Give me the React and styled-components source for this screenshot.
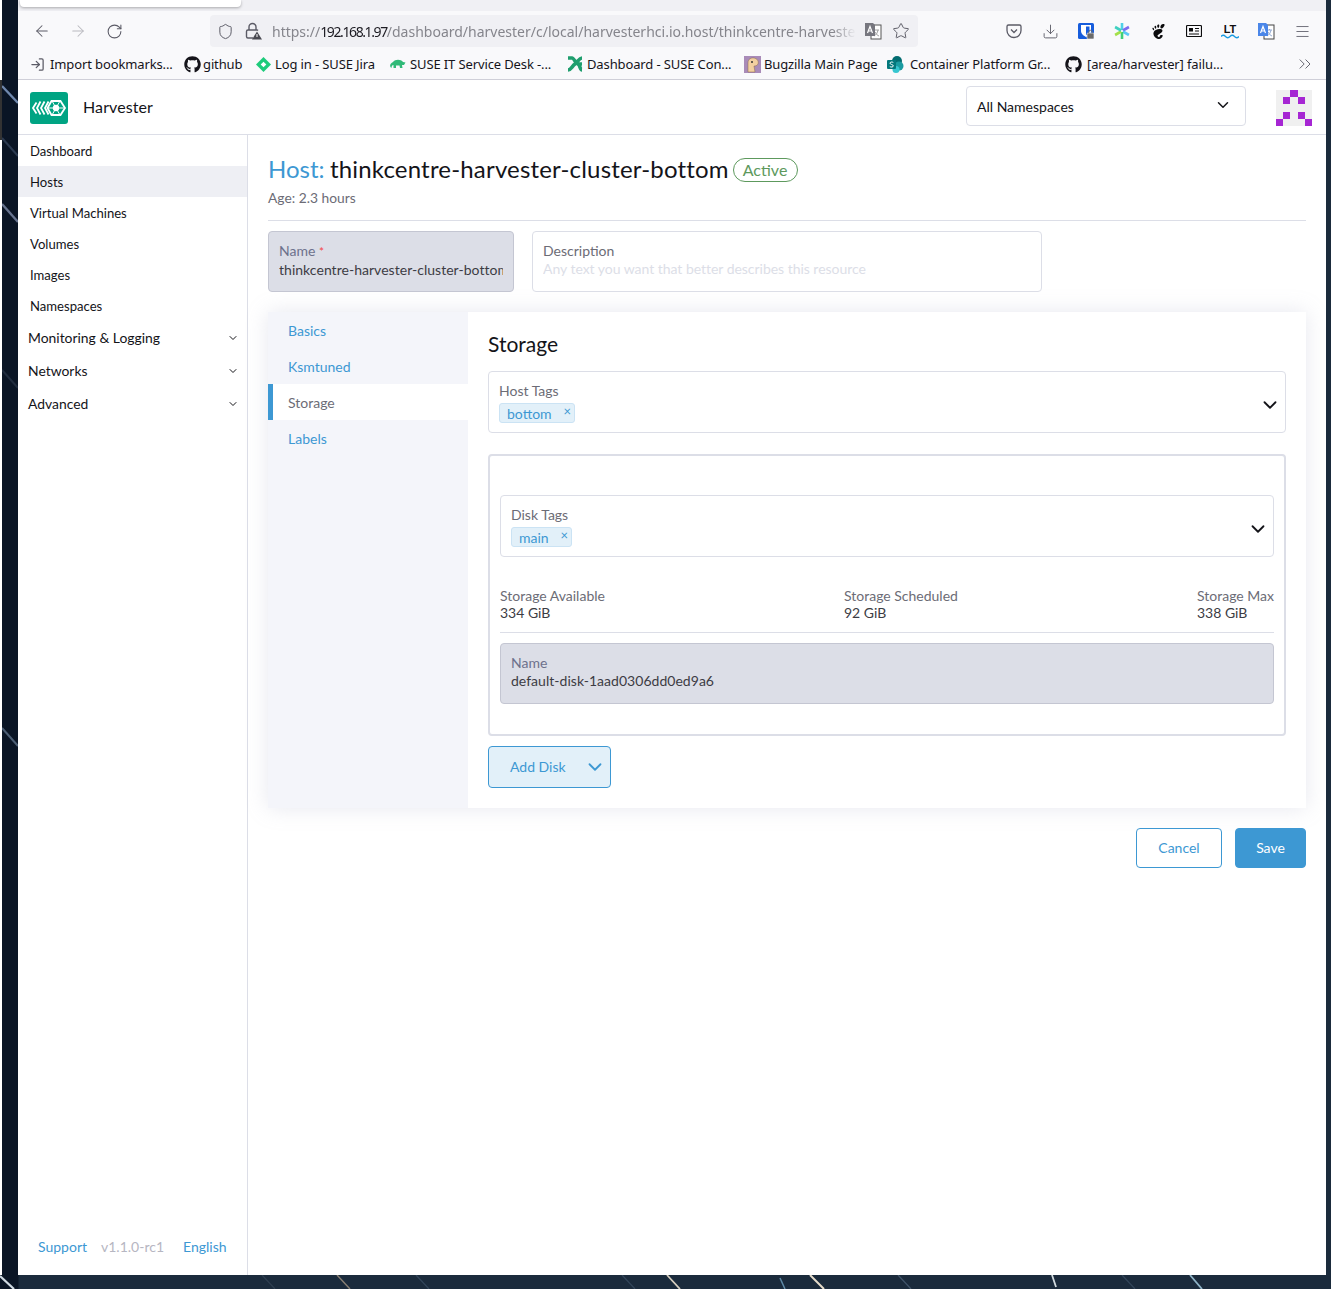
import React from 'react';
import styled, { createGlobalStyle } from 'styled-components';
import { ArrowLeft, ArrowRight, RotateCw, Shield, Star, Download, Menu, ChevronsRight, ChevronDown, LogIn } from 'lucide-react';
import { FaGithub } from 'react-icons/fa';
import { SiGnome } from 'react-icons/si';

const GlobalStyle = createGlobalStyle`
    html, body {
        margin: 0;
        padding: 0;
        background: #1a2a3a;
    }
    * {
        box-sizing: border-box;
    }
`;

const Desktop = styled.div`
    position: relative;
    width: 1331px;
    height: 1289px;
    overflow: hidden;
    background: linear-gradient(90deg, #0a1525 0, #0a1525 18px, #1b2b3c 19px);
    font-family: Lato, "Noto Sans", sans-serif;
    font-size: 14px;
    color: #141419;
`;

const Wallpaper = styled.svg`
    position: absolute;
    left: 0;
    top: 0;
`;

const EdgeStrip = styled.div`
    position: absolute;
    left: 0;
    top: 0;
    width: 2px;
    height: 1275px;
    background: linear-gradient(180deg, #fff 0, #fff 80px, #333 80px, #333 140px, #fff 140px);
`;

const Win = styled.div`
    position: relative;
    margin-left: 18px;
    width: 1308px;
    height: 1275px;
    display: flex;
    flex-direction: column;
    background: #fff;
`;

const TabStrip = styled.div`
    height: 11px;
    background: #f0f0f4;
    padding-left: 2px;
`;

const ActiveTab = styled.div`
    width: 221px;
    height: 7px;
    background: #fff;
    border-radius: 0 0 4px 4px;
    box-shadow: 0 1px 3px rgba(0, 0, 0, 0.3);
`;

const Toolbar = styled.div`
    height: 40px;
    display: flex;
    align-items: center;
    padding: 0 6px;
    background: #f9f9fb;
    color: #5b5b66;
`;

const Slot = styled.div`
    width: 36px;
    height: 32px;
    display: flex;
    align-items: center;
    justify-content: center;
    flex: none;
    color: ${(p) => p.$color || 'inherit'};
    opacity: ${(p) => (p.$dim ? 0.4 : 1)};
`;

const UrlBar = styled.div`
    width: 708px;
    height: 32px;
    margin-left: 78px;
    display: flex;
    align-items: center;
    background: #f0f0f4;
    border-radius: 4px;
    flex: none;
`;

const UrlIcon = styled.div`
    width: 27px;
    display: flex;
    justify-content: center;
    flex: none;
    margin-left: ${(p) => p.$left || 0}px;
`;

const UrlText = styled.div`
    width: 584px;
    margin-left: 6px;
    overflow: hidden;
    white-space: nowrap;
    font-family: "Noto Sans", sans-serif;
    font-size: 14px;
    color: #85858c;
    mask-image: linear-gradient(90deg, #000 96%, transparent 100%);

    b {
        font-weight: 400;
        color: #1c1b22;
        letter-spacing: -1.4px;
    }
`;

const ToolIcons = styled.div`
    margin-left: auto;
    display: flex;
`;

const LtMark = styled.div`
    display: flex;
    flex-direction: column;
    align-items: center;
    font-family: "Liberation Sans", sans-serif;
    font-size: 11px;
    font-weight: 700;
    line-height: 10px;
    color: #111;
`;

const BookmarkBar = styled.div`
    height: 29px;
    display: flex;
    align-items: flex-start;
    padding: 3px 0 0 12px;
    background: #f9f9fb;
    border-bottom: 1px solid #cfcfd8;
    position: relative;
`;

const Bookmark = styled.div`
    width: ${(p) => p.$w}px;
    flex: none;
    height: 20px;
    display: flex;
    align-items: center;
    gap: ${(p) => p.$gap || 4}px;
    font-family: "Noto Sans", sans-serif;
    font-size: 13px;
    letter-spacing: -0.12px;
    color: #15141a;
    white-space: nowrap;
    overflow: hidden;
`;

const BookmarkMore = styled.div`
    margin-left: auto;
    margin-right: 11px;
    height: 20px;
    display: flex;
    align-items: center;
    color: #5b5b66;
`;

const AppHeader = styled.header`
    height: 55px;
    display: flex;
    align-items: center;
    padding: 0 14px 0 12px;
    border-bottom: 1px solid #dcdee7;
    flex: none;
`;

const LogoWrap = styled.div`
    display: flex;
    margin-top: 1px;
`;

const ProductName = styled.div`
    margin: 0 0 1px 15px;
    font-size: 16px;
    letter-spacing: 0.1px;
`;

const NamespaceSelect = styled.div`
    margin: 0 0 2px auto;
    width: 280px;
    height: 40px;
    display: flex;
    align-items: center;
    justify-content: space-between;
    padding: 0 13px 0 10px;
    border: 1px solid #dcdee7;
    border-radius: 4px;

    svg {
        margin-bottom: 2px;
    }
`;

const Avatar = styled.svg`
    margin: 2px 0 0 30px;
    flex: none;
`;

const Body = styled.div`
    flex: 1;
    display: flex;
    min-height: 0;
`;

const Sidebar = styled.nav`
    width: 230px;
    flex: none;
    display: flex;
    flex-direction: column;
    border-right: 1px solid #dcdee7;
`;

const NavItem = styled.div`
    height: 31px;
    display: flex;
    align-items: center;
    padding-left: 12px;
    font-size: 13.1px;
    background: ${(p) => (p.$active ? '#eeeff4' : 'transparent')};
`;

const NavGroup = styled.div`
    height: 33px;
    display: flex;
    align-items: center;
    justify-content: space-between;
    padding: 0 8px 0 10px;
    font-size: 13.9px;
`;

const SideFooter = styled.div`
    margin-top: auto;
    height: 58px;
    display: flex;
    align-items: center;
    gap: 14px;
    padding-left: 20px;
`;

const FootLink = styled.span`
    color: #3d98d3;
    margin-left: ${(p) => p.$left || 0}px;
`;

const FootMuted = styled.span`
    color: #b6b6c2;
`;

const Main = styled.main`
    flex: 1;
    min-width: 0;
    padding: 20px;
`;

const TitleRow = styled.div`
    display: flex;
    align-items: center;
    gap: 4px;
    height: 30px;
`;

const Title = styled.h1`
    margin: 0;
    padding-bottom: 4px;
    font-size: 24px;
    font-weight: 400;
    letter-spacing: 0.18px;
    word-spacing: -1px;
    white-space: nowrap;

    span {
        color: #3d98d3;
        letter-spacing: 0;
    }
`;

const Badge = styled.span`
    height: 24px;
    padding: 0 10px 1px 9px;
    display: flex;
    align-items: center;
    border: 1px solid #5d995d;
    border-radius: 12px;
    color: #5d995d;
    font-size: 16px;
`;

const Age = styled.div`
    margin-top: 4px;
    line-height: 18px;
    font-size: 13.8px;
    color: #6c6c76;
`;

const Divider = styled.hr`
    margin: ${(p) => p.$m || '13px 0 10px'};
    border: 0;
    border-top: 1px solid #dcdee7;
`;

const FieldRow = styled.div`
    display: flex;
    gap: 18px;
`;

const Field = styled.div`
    width: ${(p) => p.$w || '100%'};
    height: 61px;
    padding: 10px 10px 0;
    border: 1px solid ${(p) => (p.$locked ? '#c4c6d2' : '#dcdee7')};
    border-radius: 4px;
    background: ${(p) => (p.$locked ? '#dcdee7' : '#fff')};
    line-height: 18px;
`;

const FieldLabel = styled.div`
    color: ${(p) => (p.$locked ? '#6d718c' : '#6c6c76')};

    i {
        font-style: normal;
        color: #f64747;
        font-size: 12px;
    }
`;

const FieldValue = styled.div`
    color: ${(p) => (p.$placeholder ? '#dcdee7' : '#3c3c44')};
    letter-spacing: ${(p) => (p.$placeholder ? '-0.03px' : '0.03px')};
    overflow: hidden;
    white-space: nowrap;
`;

const Panel = styled.section`
    margin-top: 20px;
    display: flex;
    box-shadow: 0 0 20px rgba(160, 165, 190, 0.25);
`;

const TabList = styled.div`
    width: 200px;
    flex: none;
    background: #f4f5fa;
`;

const Tab = styled.div`
    height: 36px;
    display: flex;
    align-items: center;
    padding-left: ${(p) => (p.$active ? 15 : 20)}px;
    color: ${(p) => (p.$active ? '#6c6c76' : '#3d98d3')};
    background: ${(p) => (p.$active ? '#fff' : 'transparent')};
    border-left: ${(p) => (p.$active ? '5px solid #3d98d3' : '0')};
`;

const TabBody = styled.div`
    flex: 1;
    min-width: 0;
    padding: 20px;
    background: #fff;
`;

const SectionTitle = styled.h3`
    margin: 0 0 15px;
    font-size: 21px;
    line-height: 24px;
    font-weight: 400;
`;

const TagSelect = styled.div`
    height: 62px;
    display: flex;
    align-items: center;
    justify-content: space-between;
    padding: 0 4px 0 10px;
    border: 1px solid #dcdee7;
    border-radius: 4px;
`;

const TagChevron = styled(ChevronDown)`
    margin-top: 5px;
`;

const TagLabel = styled.div`
    line-height: 18px;
    color: #6c6c76;
`;

const Tag = styled.div`
    width: ${(p) => p.$w}px;
    height: 20px;
    margin-top: 3px;
    display: flex;
    align-items: center;
    justify-content: space-between;
    padding: 1px 3px 0 7px;
    background: #e2f0f9;
    border: 1px solid #cbe3f4;
    border-radius: 3px;
    color: #3d98d3;
`;

const TagX = styled.span`
    font-size: 13px;
    line-height: 14px;
    margin-top: -4px;
`;

const DiskBox = styled.div`
    margin-top: 21px;
    padding: 39px 10px 30px;
    border: 2px solid #dcdee7;
    border-radius: 4px;
`;

const Stats = styled.div`
    margin-top: 30px;
    display: flex;
    justify-content: space-between;
    line-height: 17px;
`;

const StatLabel = styled.div`
    color: #6c6c76;
`;

const StatValue = styled.div`
    color: #3c3c44;
`;

const AddDisk = styled.button`
    margin-top: 10px;
    width: 123px;
    height: 42px;
    display: flex;
    align-items: center;
    justify-content: space-between;
    padding: 0 4px 2px 21px;
    background: #e2f0f9;
    border: 1px solid #3d98d3;
    border-radius: 4px;
    color: #3d98d3;
    font: inherit;

    svg {
        margin-top: 2px;
    }
`;

const Actions = styled.div`
    margin-top: 20px;
    display: flex;
    justify-content: flex-end;
    gap: 13px;
`;

const ActionButton = styled.button`
    width: ${(p) => p.$w}px;
    height: 40px;
    padding: 0 0 2px;
    border: 1px solid #3d98d3;
    border-radius: 4px;
    background: ${(p) => (p.$primary ? '#3d98d3' : '#fff')};
    color: ${(p) => (p.$primary ? '#fff' : '#3d98d3')};
    font: inherit;
`;

const STREAKS = [
    [2, 86, 18, 103, '#6f88ad', 2.4],
    [2, 138, 18, 156, '#2b3a50', 2],
    [2, 204, 18, 222, '#66738f', 2.4],
    [2, 370, 18, 388, '#202c3e', 2],
    [2, 728, 18, 746, '#4c5e74', 2],
    [0, 1276, 14, 1289, '#cfdae2', 2.2],
    [262, 1275, 275, 1289, '#2f3f50', 1.2],
    [337, 1275, 350, 1289, '#8a8074', 1.4],
    [416, 1275, 429, 1289, '#33465a', 1.2],
    [622, 1275, 635, 1289, '#33465a', 1.2],
    [667, 1275, 680, 1289, '#d8d0c0', 1.8],
    [780, 1278, 785, 1289, '#5f8aa6', 1.5],
    [810, 1275, 824, 1289, '#e6dcca', 2],
    [898, 1275, 911, 1289, '#41556a', 1.2],
    [1052, 1275, 1056, 1287, '#d2dade', 1.8],
    [1122, 1275, 1135, 1289, '#33465a', 1.2],
    [1190, 1275, 1202, 1289, '#8fb4c8', 1.8],
];

function Streaks() {
    return (
        <Wallpaper width="1331" height="1289">
            {STREAKS.map(([x1, y1, x2, y2, c, w]) => (
                <line key={`${x1}-${y1}`} x1={x1} y1={y1} x2={x2} y2={y2} stroke={c} strokeWidth={w} />
            ))}
        </Wallpaper>
    );
}

function HarvesterLogo() {
    return (
        <svg width="38" height="32" viewBox="0 0 38 32">
            <rect width="38" height="32" rx="3" fill="#00a483" />
            <g fill="none" stroke="#fff" strokeWidth="1.800">
                <path d="M6.500 10.500 L3 16 L6.500 21.500" />
                <path d="M10.500 9.500 L7 16 L10.500 22.500" />
                <path d="M14.500 9.500 L11 16 L14.500 22.500" />
                <path d="M18.500 9.500 L15 16 L18.500 22.500" />
                <path d="M21.500 9 H30.500 L35 16 L30.500 23 H21.500 L17.500 16 Z" />
                <path d="M17.500 16 H35 M22 9 L30 23 M30 9 L22 23" strokeWidth="1" />
            </g>
            <circle cx="26" cy="16" r="3.200" fill="#fff" />
        </svg>
    );
}

function LockWarning() {
    return (
        <svg width="18" height="18" viewBox="0 0 18 18" fill="none">
            <path d="M5 8 V5 a3.500 3.500 0 0 1 7 0 V8" stroke="#5b5b66" strokeWidth="1.400" />
            <path d="M9 16 H4 a1.500 1.500 0 0 1 -1.500 -1.500 V9.500 A1.500 1.500 0 0 1 4 8 H13 a1.500 1.500 0 0 1 1 .5" stroke="#5b5b66" strokeWidth="1.400" />
            <path d="M13 9.500 L18 17.500 H8 Z" fill="#4a4a52" />
            <rect x="12.500" y="12" width="1" height="3" fill="#fff" />
        </svg>
    );
}

function PocketIcon() {
    return (
        <svg width="16" height="16" viewBox="0 0 16 16" fill="none" stroke="#5b5b66" strokeWidth="1.300">
            <path d="M2.500 2 H13.500 A1.500 1.500 0 0 1 15 3.500 V7.500 A7 7 0 0 1 1 7.500 V3.500 A1.500 1.500 0 0 1 2.500 2 Z" />
            <path d="M5 6.500 L8 9.500 L11 6.500" />
        </svg>
    );
}

function BitwardenIcon() {
    return (
        <svg width="16" height="16" viewBox="0 0 16 16">
            <rect width="16" height="16" rx="1.500" fill="#175ddc" />
            <path d="M3 2 H13 V8 C13 11 10 13 8 14 C6 13 3 11 3 8 Z" fill="#fff" />
            <path d="M8 3.500 H11.500 V8 C11.500 10 9.500 11.500 8 12.300 Z" fill="#175ddc" />
            <rect x="9" y="10" width="7" height="6" rx="1" fill="#6b6b6b" stroke="#fff" strokeWidth="0.600" />
            <path d="M10.800 10 V9 a1.700 1.700 0 0 1 3.400 0 V10" fill="none" stroke="#6b6b6b" strokeWidth="1" />
        </svg>
    );
}

function AsteriskIcon() {
    const spokes = ['#4fd1e8', '#7c6df0', '#5cc8f5', '#3fd07a', '#a4e04a', '#3fd0c0'];
    return (
        <svg width="16" height="16" viewBox="0 0 16 16">
            {spokes.map((c, i) => (
                <rect key={c} x="6.700" y="0" width="2.600" height="7" fill={c} transform={`rotate(${i * 60} 8 8)`} />
            ))}
        </svg>
    );
}

function NewsIcon() {
    return (
        <svg width="16" height="14" viewBox="0 0 16 14" fill="none" stroke="#0c0c0d">
            <rect x="0.500" y="1.500" width="15" height="11" rx="1" strokeWidth="1.200" />
            <rect x="3" y="4" width="4" height="3.500" fill="#0c0c0d" strokeWidth="0" />
            <path d="M9 4.500 H13 M9 7 H13 M3 10 H13" strokeWidth="1" />
        </svg>
    );
}

function TranslateIcon() {
    return (
        <svg width="18" height="18" viewBox="0 0 18 18">
            <rect x="7" y="3" width="10" height="14" fill="#fff" stroke="#444" strokeWidth="1" />
            <path d="M10 8 H15 M12.500 7 V8 M14 8 C13.500 11 12 13 10 14 M11 10 C12 12 13.500 13.500 15 14" stroke="#8aa4d0" strokeWidth="0.900" fill="none" />
            <path d="M1 1 H9 L11 3 V14 H1 Z" fill="#4a86e8" />
            <path d="M3.500 11 L6 4.500 L8.500 11 M4.500 9 H7.500" stroke="#fff" strokeWidth="1.200" fill="none" />
        </svg>
    );
}

function TranslateGrey() {
    return (
        <svg width="18" height="18" viewBox="0 0 18 18">
            <rect x="7" y="3" width="10" height="14" fill="#fff" stroke="#555" strokeWidth="1" />
            <path d="M10 8 H15 M14 8 C13.500 11 12 13 10 14 M11 10 C12 12 13.500 13.500 15 14" stroke="#999" strokeWidth="0.900" fill="none" />
            <path d="M1 1 H9 L11 3 V14 H1 Z" fill="#77777f" />
            <path d="M3.500 11 L6 4.500 L8.500 11 M4.500 9 H7.500" stroke="#fff" strokeWidth="1.200" fill="none" />
        </svg>
    );
}

function JiraIcon() {
    return (
        <svg width="15" height="15" viewBox="0 0 16 16">
            <path d="M8 0 L16 8 L8 16 L0 8 Z" fill="#1ecb7b" />
            <path d="M8 5 L11 8 L8 11 L5 8 Z" fill="#fff" />
        </svg>
    );
}

function GeekoIcon() {
    return (
        <svg width="18" height="14" viewBox="0 0 18 14">
            <path d="M5 5 C7 2 13 2 15 5 L17.500 5.500 L16 8 L14 8 L14.500 11 L12 11 L11.500 8.500 L8 8.500 L8 11 L5.500 11 L5.500 8 C4 8 3.500 9.500 3.500 11 C1.500 10 1.500 6.500 5 5 Z" fill="#30ba78" />
        </svg>
    );
}

function ConfluenceIcon() {
    return (
        <svg width="18" height="18" viewBox="0 0 18 18" fill="none" stroke="#1f9e6e" strokeWidth="3.600">
            <path d="M2 3 L6 3 C8 3 10 9 12 9 L16 9" />
            <path d="M16 3 C13 3 12 7 9 9 C6 11 5 15 2 15" />
            <path d="M12 9 C14 10 14 15 16 15" />
        </svg>
    );
}

function BugzillaIcon() {
    return (
        <svg width="17" height="17" viewBox="0 0 17 17">
            <rect width="17" height="17" fill="#a98bb8" />
            <path d="M4 16 V7 C4 3 7 1.500 10 2 C13 2.500 15 5 14 8 C13 10 11 10 10 10 L11 16 Z" fill="#f2cfa0" stroke="#8a6a4a" strokeWidth="0.500" />
            <circle cx="8" cy="6" r="1" fill="#333" />
        </svg>
    );
}

function SharePointIcon() {
    return (
        <svg width="17" height="17" viewBox="0 0 17 17">
            <circle cx="10" cy="5" r="5" fill="#036c70" />
            <circle cx="12" cy="10" r="4.500" fill="#1a9ba1" />
            <circle cx="9" cy="13.500" r="3.500" fill="#37c6d0" />
            <rect x="0" y="4" width="9" height="9" rx="1" fill="#03787c" />
            <path d="M6.300 6.500 C5 5.600 3 6 3 7.200 C3 8.800 6.300 8.200 6.300 9.900 C6.300 11.200 4 11.400 2.800 10.500" stroke="#fff" fill="none" strokeWidth="1" />
        </svg>
    );
}

function LtIcon() {
    return (
        <LtMark>
            LT
            <svg width="18" height="5" viewBox="0 0 18 5">
                <path d="M0 2.500 Q2.250 0 4.500 2.500 T9 2.500 T13.500 2.500 T18 2.500" stroke="#1a9be0" strokeWidth="1.300" fill="none" />
            </svg>
        </LtMark>
    );
}

function UserAvatar() {
    const cells = [[2, 0], [1, 1], [3, 1], [1, 3], [3, 3], [0, 4], [4, 4]];
    return (
        <Avatar width="36" height="36" viewBox="0 0 5 5" shapeRendering="crispEdges">
            <rect width="5" height="5" fill="#f0f0f0" />
            {cells.map(([x, y]) => (
                <rect key={`${x}${y}`} x={x} y={y} width="1" height="1" fill="#a626d3" />
            ))}
        </Avatar>
    );
}

const BOOKMARKS = [
    { w: 154, label: 'Import bookmarks...', gap: 5, icon: <LogIn size={15} color="#5b5b66" /> },
    { w: 72, label: 'github', gap: 2, icon: <FaGithub size={17} color="#15141a" /> },
    { w: 132, label: 'Log in - SUSE Jira', icon: <JiraIcon /> },
    { w: 178, label: 'SUSE IT Service Desk -...', icon: <GeekoIcon /> },
    { w: 178, label: 'Dashboard - SUSE Con...', gap: 3, icon: <ConfluenceIcon /> },
    { w: 143, label: 'Bugzilla Main Page', gap: 3, icon: <BugzillaIcon /> },
    { w: 178, label: 'Container Platform Gr...', gap: 6, icon: <SharePointIcon /> },
    { w: 190, label: '[area/harvester] failu...', gap: 5, icon: <FaGithub size={17} color="#15141a" /> },
];

const NAV_ITEMS = ['Dashboard', 'Hosts', 'Virtual Machines', 'Volumes', 'Images', 'Namespaces'];
const NAV_GROUPS = ['Monitoring & Logging', 'Networks', 'Advanced'];
const TABS = ['Basics', 'Ksmtuned', 'Storage', 'Labels'];

export default function App() {
    return (
        <Desktop>
            <GlobalStyle />
            <Streaks />
            <EdgeStrip />
            <Win>
                <TabStrip>
                    <ActiveTab />
                </TabStrip>
                <Toolbar>
                    <Slot><ArrowLeft size={18} strokeWidth={1.400} /></Slot>
                    <Slot $dim><ArrowRight size={18} strokeWidth={1.400} /></Slot>
                    <Slot><RotateCw size={17} strokeWidth={1.500} /></Slot>
                    <UrlBar>
                        <UrlIcon $left={2}><Shield size={17} strokeWidth={1.400} /></UrlIcon>
                        <UrlIcon><LockWarning /></UrlIcon>
                        <UrlText>https://<b>192.168.1.97</b>/dashboard/harvester/c/local/harvesterhci.io.host/thinkcentre-harvester</UrlText>
                        <UrlIcon $left={3}><TranslateGrey /></UrlIcon>
                        <UrlIcon $left={1}><Star size={18} strokeWidth={1.300} /></UrlIcon>
                    </UrlBar>
                    <ToolIcons>
                        <Slot><PocketIcon /></Slot>
                        <Slot><Download size={17} strokeWidth={1.300} /></Slot>
                        <Slot><BitwardenIcon /></Slot>
                        <Slot><AsteriskIcon /></Slot>
                        <Slot $color="#0c0c0d"><SiGnome size={15} /></Slot>
                        <Slot><NewsIcon /></Slot>
                        <Slot><LtIcon /></Slot>
                        <Slot><TranslateIcon /></Slot>
                        <Slot><Menu size={17} strokeWidth={1.200} /></Slot>
                    </ToolIcons>
                </Toolbar>
                <BookmarkBar>
                    {BOOKMARKS.map((b) => (
                        <Bookmark key={b.label} $w={b.w} $gap={b.gap}>
                            {b.icon}
                            {b.label}
                        </Bookmark>
                    ))}
                    <BookmarkMore><ChevronsRight size={20} strokeWidth={1.100} /></BookmarkMore>
                </BookmarkBar>
                <AppHeader>
                    <LogoWrap><HarvesterLogo /></LogoWrap>
                    <ProductName>Harvester</ProductName>
                    <NamespaceSelect>
                        All Namespaces
                        <ChevronDown size={18} strokeWidth={2} />
                    </NamespaceSelect>
                    <UserAvatar />
                </AppHeader>
                <Body>
                    <Sidebar>
                        {NAV_ITEMS.map((item) => (
                            <NavItem key={item} $active={item === 'Hosts'}>{item}</NavItem>
                        ))}
                        {NAV_GROUPS.map((group) => (
                            <NavGroup key={group}>
                                {group}
                                <ChevronDown size={12} strokeWidth={2} />
                            </NavGroup>
                        ))}
                        <SideFooter>
                            <FootLink>Support</FootLink>
                            <FootMuted>v1.1.0-rc1</FootMuted>
                            <FootLink $left={5}>English</FootLink>
                        </SideFooter>
                    </Sidebar>
                    <Main>
                        <TitleRow>
                            <Title><span>Host:</span> thinkcentre-harvester-cluster-bottom</Title>
                            <Badge>Active</Badge>
                        </TitleRow>
                        <Age>Age: 2.3 hours</Age>
                        <Divider />
                        <FieldRow>
                            <Field $w="246px" $locked>
                                <FieldLabel $locked>Name <i>*</i></FieldLabel>
                                <FieldValue>thinkcentre-harvester-cluster-bottom</FieldValue>
                            </Field>
                            <Field $w="510px">
                                <FieldLabel>Description</FieldLabel>
                                <FieldValue $placeholder>Any text you want that better describes this resource</FieldValue>
                            </Field>
                        </FieldRow>
                        <Panel>
                            <TabList>
                                {TABS.map((tab) => (
                                    <Tab key={tab} $active={tab === 'Storage'}>{tab}</Tab>
                                ))}
                            </TabList>
                            <TabBody>
                                <SectionTitle>Storage</SectionTitle>
                                <TagSelect>
                                    <div>
                                        <TagLabel>Host Tags</TagLabel>
                                        <Tag $w={76}>bottom <TagX>×</TagX></Tag>
                                    </div>
                                    <TagChevron size={22} strokeWidth={2} />
                                </TagSelect>
                                <DiskBox>
                                    <TagSelect>
                                        <div>
                                            <TagLabel>Disk Tags</TagLabel>
                                            <Tag $w={61}>main <TagX>×</TagX></Tag>
                                        </div>
                                        <TagChevron size={22} strokeWidth={2} />
                                    </TagSelect>
                                    <Stats>
                                        <div>
                                            <StatLabel>Storage Available</StatLabel>
                                            <StatValue>334 GiB</StatValue>
                                        </div>
                                        <div>
                                            <StatLabel>Storage Scheduled</StatLabel>
                                            <StatValue>92 GiB</StatValue>
                                        </div>
                                        <div>
                                            <StatLabel>Storage Max</StatLabel>
                                            <StatValue>338 GiB</StatValue>
                                        </div>
                                    </Stats>
                                    <Divider $m="11px 0 10px" />
                                    <Field $locked>
                                        <FieldLabel $locked>Name</FieldLabel>
                                        <FieldValue>default-disk-1aad0306dd0ed9a6</FieldValue>
                                    </Field>
                                </DiskBox>
                                <AddDisk>
                                    Add Disk
                                    <ChevronDown size={22} strokeWidth={2} />
                                </AddDisk>
                            </TabBody>
                        </Panel>
                        <Actions>
                            <ActionButton $w={86}>Cancel</ActionButton>
                            <ActionButton $w={71} $primary>Save</ActionButton>
                        </Actions>
                    </Main>
                </Body>
            </Win>
        </Desktop>
    );
}
